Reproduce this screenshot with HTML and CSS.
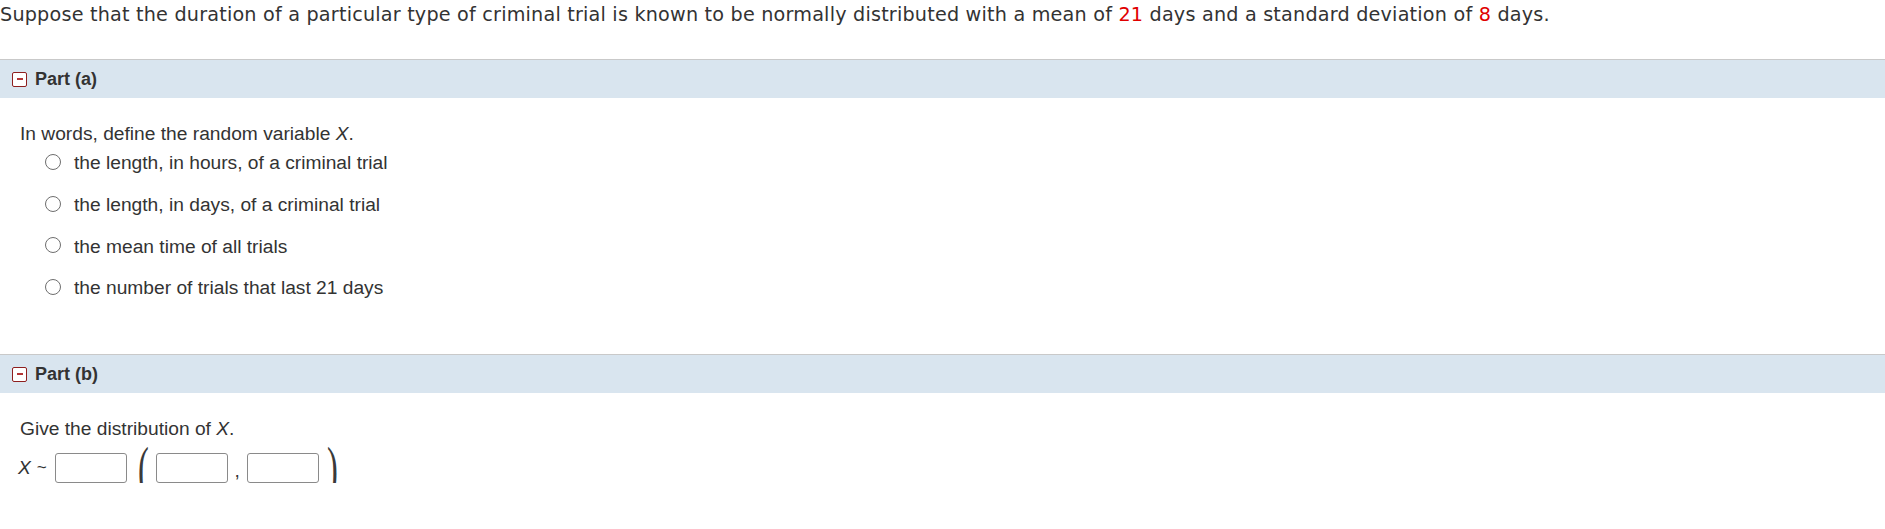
FILE: index.html
```html
<!DOCTYPE html>
<html>
<head>
<meta charset="utf-8">
<link rel="stylesheet" href="styles.css">
</head>
<body>
<div class="intro">Suppose that the duration of a particular type of criminal trial is known to be normally distributed with a mean of <span class="num">21</span> days and a standard deviation of <span class="num">8</span> days.</div>

<div class="part-header"><span class="toggle"><span class="minus"></span></span><span class="part-title">Part (a)</span></div>
<div class="part-body part-a">
  <div class="question">In words, define the random variable <i>X</i>.</div>
  <div class="options">
    <div class="option"><span class="radio"></span><span class="label">the length, in hours, of a criminal trial</span></div>
    <div class="option"><span class="radio"></span><span class="label">the length, in days, of a criminal trial</span></div>
    <div class="option"><span class="radio"></span><span class="label">the mean time of all trials</span></div>
    <div class="option"><span class="radio"></span><span class="label">the number of trials that last 21 days</span></div>
  </div>
</div>

<div class="part-header part-b-header"><span class="toggle"><span class="minus"></span></span><span class="part-title">Part (b)</span></div>
<div class="part-body">
  <div class="question">Give the distribution of <i>X</i>.</div>
  <div class="dist-row">
    <i class="xvar">X</i><span class="tilde">~</span>
    <span class="box box1"></span>
    <span class="paren lparen">(</span>
    <span class="box box2"></span>
    <span class="comma">,</span>
    <span class="box box3"></span>
    <span class="paren rparen">)</span>
  </div>
</div>
</body>
</html>
```

FILE: styles.css
```css
html, body {
  margin: 0;
  padding: 0;
  background: #ffffff;
}

.intro {
  font-family: "DejaVu Sans", Verdana, sans-serif;
  font-size: 19.2px;
  letter-spacing: 0.2px;
  line-height: 24px;
  color: #333333;
  padding-top: 3px;
  white-space: nowrap;
}

.num {
  color: #e00000;
}

.part-header {
  margin-top: 32px;
  border-top: 1px solid #c9c9c9;
  background: #d9e5ef;
  height: 38px;
  display: flex;
  align-items: center;
  padding-left: 12px;
  font-family: "Liberation Sans", Arial, sans-serif;
  font-size: 18px;
  font-weight: bold;
  color: #333333;
}

.part-b-header {
  margin-top: 41px;
}

.toggle {
  box-sizing: border-box;
  width: 15px;
  height: 15px;
  border: 1.5px solid #8e1f1f;
  border-radius: 2px;
  background: #ffffff;
  display: flex;
  align-items: center;
  justify-content: center;
}

.minus {
  width: 6px;
  height: 2px;
  background: #b33535;
}

.part-title {
  margin-left: 8px;
  line-height: 38px;
}

.part-body {
  padding: 25.3px 0 0 20px;
  font-family: "Liberation Sans", Arial, sans-serif;
  font-size: 19.2px;
  color: #333333;
}

.question {
  line-height: 22px;
}

.options {
  margin-top: 1px;
}

.option {
  display: flex;
  align-items: flex-start;
  padding: 6px 0 13.7px 25px;
  line-height: 22px;
}

.radio {
  box-sizing: border-box;
  width: 16px;
  height: 16px;
  border: 1.6px solid #6e6e6e;
  border-radius: 50%;
  margin-top: 1.7px;
  flex: none;
}

.label {
  margin-left: 13px;
}

.dist-row {
  display: flex;
  align-items: center;
  margin-top: 12.7px;
  height: 30px;
  margin-left: -2px;
}

.xvar {
  font-style: italic;
}

.tilde {
  margin-left: 6px;
  font-size: 17px;
}

.box {
  box-sizing: border-box;
  width: 72px;
  height: 30px;
  border: 1px solid #8a8a8a;
  border-radius: 3px;
  background: #ffffff;
  flex: none;
}

.box1 {
  margin-left: 8px;
}

.paren {
  display: inline-block;
  font-family: "Liberation Serif", "Times New Roman", serif;
  font-size: 26px;
  line-height: 30px;
  color: #3a3a3a;
  transform: translateY(2px) scale(1.25, 2.25);
}

.lparen {
  margin-left: 12px;
  margin-right: 9px;
}

.comma {
  margin-left: 6px;
  margin-right: 7px;
  position: relative;
  top: 3px;
}

.rparen {
  margin-left: 9px;
}
```
